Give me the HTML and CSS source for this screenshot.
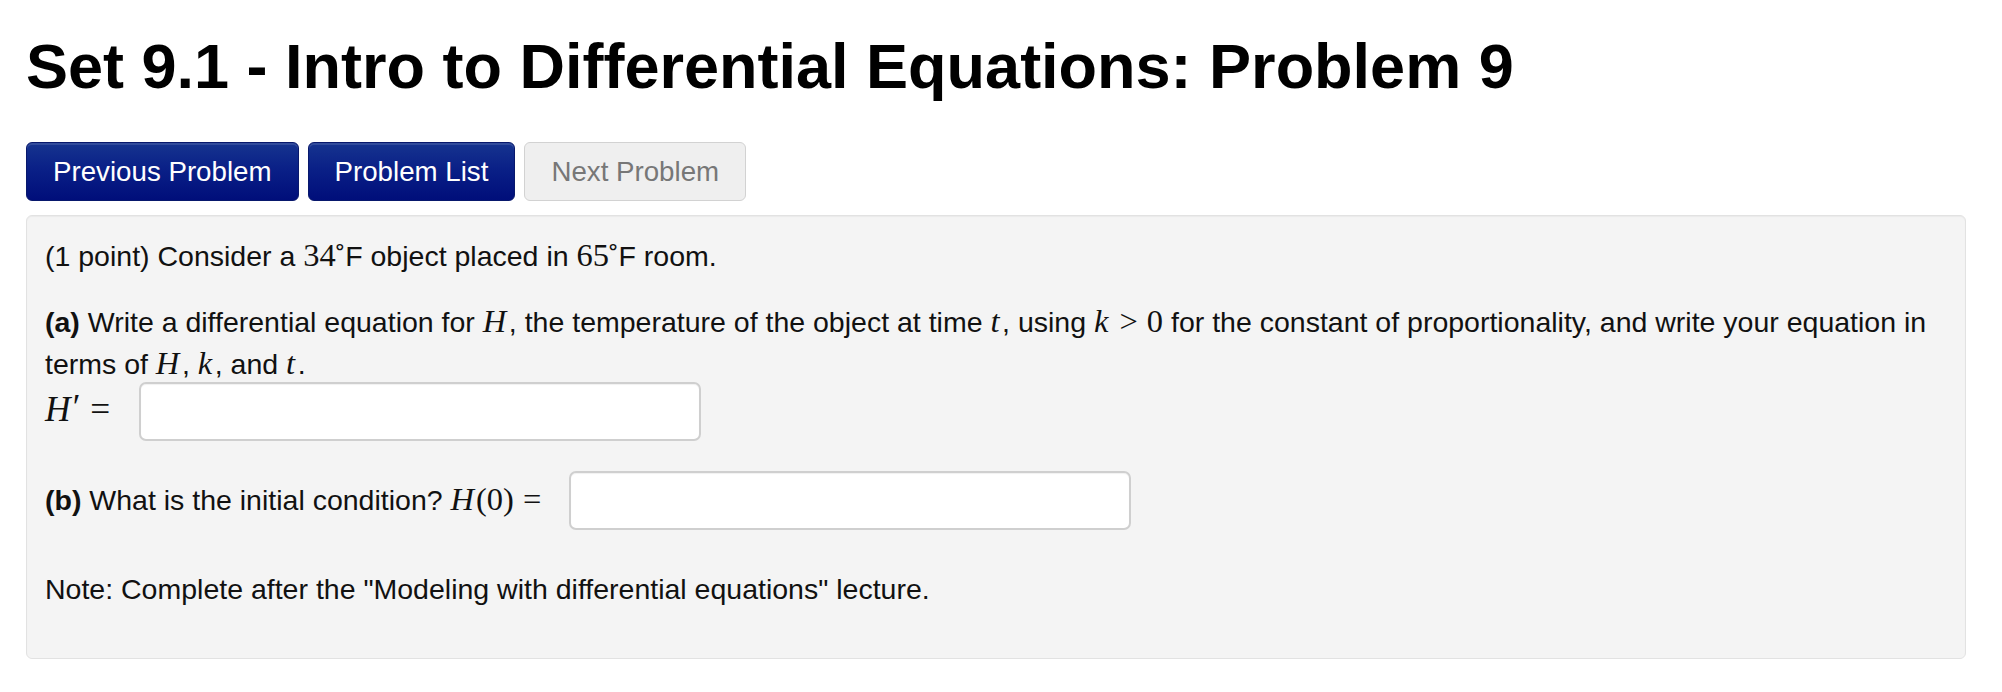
FILE: index.html
```html
<!DOCTYPE html>
<html lang="en">
<head>
<meta charset="utf-8">
<title>Set 9.1 - Intro to Differential Equations: Problem 9</title>
<link rel="stylesheet" href="styles.css">
</head>
<body>
<div class="page">
  <h1 class="title">Set 9.1 - Intro to Differential Equations: Problem 9</h1>
  <div class="nav">
    <a class="btn btn-primary">Previous Problem</a>
    <a class="btn btn-primary">Problem List</a>
    <span class="btn btn-disabled">Next Problem</span>
  </div>
  <div class="problem">
    <p class="intro">(1 point) Consider a <span class="mn">34</span>˚F object placed in <span class="mn">65</span>˚F room.</p>
    <p class="part-a"><b>(a)</b> Write a differential equation for <span class="mi">H</span>, the temperature of the object at time <span class="mi">t</span>, using <span class="math"><i>k</i><span class="op">&gt;</span>0</span> for the constant of proportionality, and write your equation in terms of <span class="mi">H</span>, <span class="mi">k</span>, and <span class="mi">t</span>.</p>
    <p class="answer-row"><span class="math lhs"><i>H</i><span class="prime">′</span><span class="op">=</span></span><input class="answer" type="text"></p>
    <p class="part-b"><b>(b)</b> What is the initial condition? <span class="math"><i>H</i>(0)<span class="op">=</span></span><input class="answer" type="text"></p>
    <p class="note">Note: Complete after the "Modeling with differential equations" lecture.</p>
  </div>
</div>
</body>
</html>
```
FILE: styles.css
```css
html, body {
  margin: 0;
  padding: 0;
  background: #ffffff;
}

body {
  font-family: "Liberation Sans", Arial, Helvetica, sans-serif;
  color: #111;
}

.page {
  width: 1940px;
  margin-left: 26px;
  padding-top: 32px;
}

.title {
  margin: 0;
  font-size: 63px;
  line-height: 68px;
  font-weight: bold;
  color: #000;
}

.nav {
  display: flex;
  gap: 9px;
  margin-top: 42px;
}

.btn {
  display: inline-block;
  box-sizing: border-box;
  height: 59px;
  padding: 0 26px;
  font-size: 27.7px;
  line-height: 57px;
  border-radius: 6px;
  border: 1px solid;
  text-decoration: none;
  cursor: pointer;
}

.btn-primary {
  color: #fff;
  background: linear-gradient(to bottom, #16348f 0%, #0a2087 45%, #000e7a 100%);
  border-color: #08186c;
  box-shadow: inset 0 2px 0 rgba(255, 255, 255, 0.12);
}

.btn-disabled {
  color: #777;
  background: #efefef;
  border-color: #d2d2d2;
}

.problem {
  margin-top: 14px;
  background: #f4f4f4;
  border: 1px solid #e2e2e2;
  border-radius: 6px;
  box-shadow: inset 0 1px 1px rgba(0, 0, 0, 0.04);
  padding: 19px 18px 48px 18px;
  font-size: 28.5px;
  line-height: 42px;
}

.problem p {
  margin: 0;
}

.intro {
  margin-bottom: 24px !important;
}

.answer-row {
  margin-top: -3px !important;
}

.part-b {
  margin-top: 30px !important;
}

.note {
  margin-top: 38px !important;
}

.mn,
.mi,
.math {
  font-family: "Liberation Serif", "Times New Roman", serif;
  font-size: 1.14em;
  line-height: 1;
}

.mi,
.math i {
  font-style: italic;
}

.mi {
  padding-right: 0.08em;
}

.math i {
  padding-right: 0.06em;
}

.lhs {
  font-size: 1.24em;
  line-height: 0.8;
}

.prime {
  display: inline-block;
  font-style: normal;
  transform: translateY(-0.05em);
}

.op {
  margin: 0 0.28em;
}

.answer {
  box-sizing: border-box;
  width: 562px;
  height: 59px;
  margin-left: 19px;
  padding: 0 10px;
  font-size: 28.5px;
  font-family: "Liberation Sans", Arial, sans-serif;
  background: #fff;
  border: 2px solid #cfcfcf;
  border-radius: 7px;
  box-shadow: inset 0 1px 1px rgba(0, 0, 0, 0.06);
  outline: none;
  vertical-align: baseline;
}
```
